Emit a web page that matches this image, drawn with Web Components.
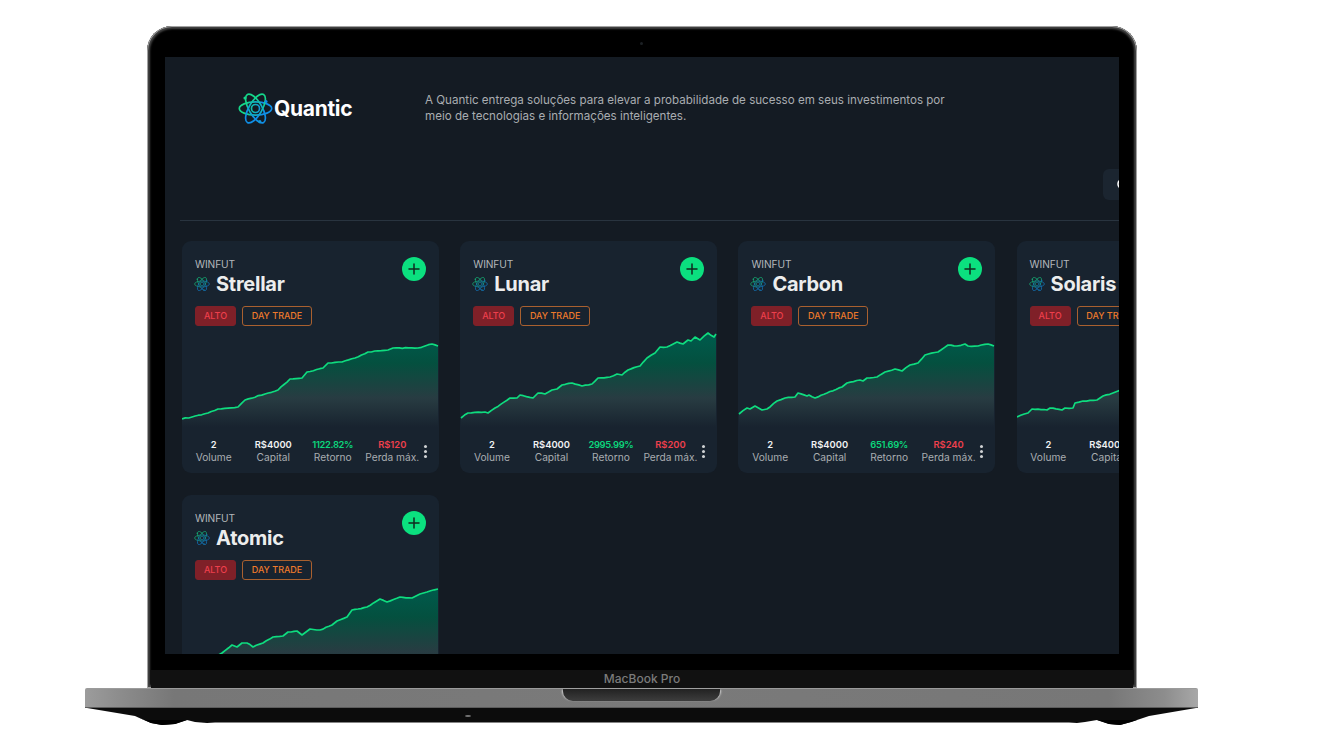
<!DOCTYPE html>
<html lang="pt-BR">
<head>
<meta charset="utf-8">
<title>Quantic</title>
<style>
html, body { margin: 0; background: #fff; }
body { font-family: "Inter", "Liberation Sans", sans-serif; overflow: hidden; }
</style>
</head>
<body>

<laptop-mock>
  <site-header></site-header>
  <search-bar></search-bar>
  <card-grid>
    <strategy-card retorno="1122.82%" perda="R$120" points="0,89 10,87 26,83 36,79 56,77 63,70 83,64 96,60 108,49 120,48 125,42 141,38 146,33 160,32 173,28 186,22 206,20 211,18 236,18 250,14 256,16">Strellar</strategy-card>
    <strategy-card retorno="2995.99%" perda="R$200" points="1,88 8,83 25,82 28,83 35,78 50,68 57,68 60,65 73,68 78,63 85,64 92,60 97,59 102,55 112,53 122,56 132,54 138,48 150,47 157,44 162,45 168,40 180,36 187,28 195,23 200,17 207,17 217,12 223,14 228,10 231,11 235,7 240,10 248,3 254,7 256,4">Lunar</strategy-card>
    <strategy-card retorno="651.69%" perda="R$240" points="1,84 9,78 12,79 17,76 24,80 29,79 39,71 47,68 57,67 60,63 69,66 71,65 77,68 89,63 104,57 109,53 122,50 125,51 129,48 139,47 147,42 157,39 164,41 172,35 180,33 187,25 200,22 210,15 219,16 227,14 230,16 240,16 250,14 256,16">Carbon</strategy-card>
    <strategy-card retorno="980.10%" perda="R$160" points="0,87 11,83 15,79 30,80 33,78 45,80 48,78 56,78 58,73 66,71 80,70 86,66 96,63 101,61 130,55 170,45 200,32 256,20">Solaris</strategy-card>
    <strategy-card retorno="1450.30%" perda="R$180" points="0,92 20,82 40,69 50,61 55,63 60,59 65,59 71,63 81,59 91,53 101,52 106,48 115,47 120,51 128,45 138,46 150,41 155,37 165,33 170,26 185,23 198,15 205,18 218,13 230,14 238,10 245,8 256,5">Atomic</strategy-card>
  </card-grid>
</laptop-mock>

<script>
const atomSvg = (size, id, from, to) => `
<svg width="${size}" height="${size}" viewBox="-20 -20 40 40" fill="none" aria-hidden="true">
  <defs>
    <linearGradient id="${id}" x1="-18" y1="0" x2="18" y2="0" gradientUnits="userSpaceOnUse">
      <stop offset="0.2" stop-color="${from}"/>
      <stop offset="0.7" stop-color="${to}"/>
    </linearGradient>
  </defs>
  <g stroke="url(#${id})" stroke-width="1.9">
    <ellipse cx="0" cy="0" rx="18.5" ry="7.5"/>
    <ellipse cx="0" cy="0" rx="18.5" ry="7.5" transform="rotate(60)"/>
    <ellipse cx="0" cy="0" rx="18.5" ry="7.5" transform="rotate(120)"/>
    <circle cx="0" cy="0" r="4.6"/>
  </g>
  <g fill="url(#${id})">
    <circle cx="-12" cy="-12" r="1.8"/>
    <circle cx="12" cy="-8" r="1.8"/>
    <circle cx="5" cy="15" r="1.8"/>
  </g>
</svg>`;

// laptop frame around the app
const laptopTemplate = document.createElement('template');
laptopTemplate.innerHTML = `
<style>
:host { display: block; width: 1337px; padding-top: 26px; }
.lid {
    box-sizing: border-box;
    width: 990px;
    height: 662px;
    margin-left: 147px;
    padding: 31px 18px 0;
    background: #000;
    border-radius: 25px 25px 0 0;
    box-shadow: inset 0 0 0 1px #a2a2a2, inset 0 0 2px 3px #444;
    position: relative;
    display: flex;
    flex-direction: column;
}
.camera {
    position: absolute;
    top: 16px;
    left: 493px;
    width: 3px;
    height: 3px;
    border-radius: 50%;
    background: #1c2024;
}
.screen {
    width: 954px;
    height: 597px;
    flex: none;
    background: #141b23;
    overflow: hidden;
}
.chin {
    margin: 16px -14px 0;
    flex: 1;
    background: #111;
    color: #7b7b7b;
    font: 500 12px/18px "Inter", "Liberation Sans", sans-serif;
    text-align: center;
}
.base {
    box-sizing: border-box;
    width: 1113px;
    height: 20px;
    margin-left: 85px;
    background: linear-gradient(90deg, #9c9c9c 0, #8d8d8d 3%, #777 8%, #7a7a7a 50%, #777 92%, #8d8d8d 97%, #a8a8a8 100%);
    border-top: 1px solid #9b9b9b;
    border-bottom: 1px solid #5c5c5c;
    border-radius: 2px 2px 0 0;
    display: flex;
    justify-content: center;
}
.notch {
    width: 157px;
    height: 12px;
    background: linear-gradient(#222, #3d3d3d);
    border-radius: 0 0 10px 10px;
    box-shadow: -2px 0 2px -1px #d8d8d8, 2px 0 2px -1px #d8d8d8;
}
.under { display: block; margin-left: 85px; }
</style>
<div class="lid">
  <div class="camera"></div>
  <div class="screen"><slot></slot></div>
  <div class="chin">MacBook Pro</div>
</div>
<div class="base"><div class="notch"></div></div>
<svg class="under" width="1113" height="18" viewBox="0 0 1113 18">
  <path d="M2 0H1111L1064 8 1046 14 1035 17 1024 16 1012 12 1000 14 992 15 984 14.500H130L122 15 110 14 102 12 90 16 77 17 66 15 50 8Z" fill="#0c0c0c"/>
  <path d="M50 8 66 15 77 17 90 16 102 12H60ZM1064 8 1046 14 1035 17 1024 16 1012 12H1052Z" fill="#000"/>
  <ellipse cx="383" cy="8" rx="3" ry="1" fill="#777"/>
</svg>`;

class LaptopMock extends HTMLElement {
  constructor() {
    super();
    this.attachShadow({ mode: 'open' }).appendChild(laptopTemplate.content.cloneNode(true));
  }
}
customElements.define('laptop-mock', LaptopMock);

// logo + description
const headerTemplate = document.createElement('template');
headerTemplate.innerHTML = `
<style>
:host { display: flex; align-items: center; height: 34px; padding: 34px 0 0 73px; }
.logo { width: 187px; flex: none; display: flex; align-items: center; gap: 1px; }
.name { color: #fff; font: 700 21px/34px "Inter", "Liberation Sans", sans-serif; letter-spacing: -0.3px; padding-top: 2px; }
p {
    margin: 0;
    width: 540px;
    color: #a9adb1;
    font: 400 11.6px/16px "Inter", "Liberation Sans", sans-serif;
}
</style>
<div class="logo">${atomSvg(35, 'logoGrad', '#14d88a', '#0f8ee6')}<span class="name">Quantic</span></div>
<p>A Quantic entrega soluções para elevar a probabilidade de sucesso em seus investimentos por<br>meio de tecnologias e informações inteligentes.</p>`;

class SiteHeader extends HTMLElement {
  constructor() {
    super();
    this.attachShadow({ mode: 'open' }).appendChild(headerTemplate.content.cloneNode(true));
  }
}
customElements.define('site-header', SiteHeader);

// search field, mostly cut off by the screen edge
const searchTemplate = document.createElement('template');
searchTemplate.innerHTML = `
<style>
:host { display: block; padding-top: 44px; }
.row { display: flex; padding-left: 938px; height: 31px; }
.field {
    flex: none;
    width: 120px;
    box-sizing: border-box;
    padding-left: 14px;
    background: #1b2530;
    border-radius: 6px;
    display: flex;
    align-items: center;
}
hr { border: 0; height: 1px; margin: 20px 0 0 15px; background: #29343f; }
</style>
<div class="row">
  <div class="field">
    <svg width="14" height="14" viewBox="0 0 14 14" fill="none"><circle cx="6" cy="6" r="5" stroke="#fff" stroke-width="1.6"/><path d="M10 10l3 3" stroke="#fff" stroke-width="1.6"/></svg>
  </div>
</div>
<hr>`;

class SearchBar extends HTMLElement {
  constructor() {
    super();
    this.attachShadow({ mode: 'open' }).appendChild(searchTemplate.content.cloneNode(true));
  }
}
customElements.define('search-bar', SearchBar);

const gridTemplate = document.createElement('template');
gridTemplate.innerHTML = `
<style>
:host {
    display: grid;
    grid-template-columns: repeat(4, 257px);
    gap: 22px 21.2px;
    padding: 20px 0 0 17px;
}
</style>
<slot></slot>`;

class CardGrid extends HTMLElement {
  constructor() {
    super();
    this.attachShadow({ mode: 'open' }).appendChild(gridTemplate.content.cloneNode(true));
  }
}
customElements.define('card-grid', CardGrid);

// area chart; adds a small seeded wobble between the hand-read points
let chartCount = 0;
class SparkChart extends HTMLElement {
  constructor() {
    super();
    this.attachShadow({ mode: 'open' });
  }
  connectedCallback() {
    const pts = this.getAttribute('points').trim().split(/\s+/).map(p => p.split(',').map(Number));
    let seed = 7 + chartCount * 13;
    const rnd = () => { seed = (seed * 16807) % 2147483647; return seed / 2147483647 - 0.5; };
    const line = [];
    pts.forEach((p, i) => {
      line.push(p);
      const next = pts[i + 1];
      if (!next) return;
      const steps = Math.floor((next[0] - p[0]) / 3);
      for (let s = 1; s < steps; s++) {
        const t = s / steps;
        line.push([p[0] + (next[0] - p[0]) * t, p[1] + (next[1] - p[1]) * t + rnd() * 0.8]);
      }
    });
    const d = line.map(p => p[0].toFixed(1) + ' ' + p[1].toFixed(1)).join('L');
    const id = 'area' + chartCount++;
    const lastX = line[line.length - 1][0];
    this.shadowRoot.innerHTML = `
<style>
:host { display: block; height: 100px; }
svg { display: block; }
</style>
<svg width="257" height="100" viewBox="0 0 257 100">
  <defs>
    <linearGradient id="${id}" x1="0" y1="0" x2="0" y2="100" gradientUnits="userSpaceOnUse">
      <stop offset="0.1" stop-color="#00594a"/>
      <stop offset="0.33" stop-color="#04503f"/>
      <stop offset="0.68" stop-color="#283c42"/>
      <stop offset="0.97" stop-color="#18232f"/>
    </linearGradient>
  </defs>
  <path d="M${d}L${lastX} 100L${line[0][0]} 100Z" fill="url(#${id})"/>
  <path d="M${d}" fill="none" stroke="#0fdc7f" stroke-width="1.7" stroke-linejoin="round"/>
</svg>`;
  }
}
customElements.define('spark-chart', SparkChart);

const statTemplate = document.createElement('template');
statTemplate.innerHTML = `
<style>
:host { display: block; text-align: center; white-space: nowrap; justify-self: center; }
.value { font: 600 9.4px/12px "Inter", "Liberation Sans", sans-serif; letter-spacing: var(--stat-spacing, 0); color: var(--stat-colour, #f1f2f3); }
.label { font: 400 10.2px/12px "Inter", "Liberation Sans", sans-serif; color: #a9adb1; }
</style>
<div class="value"><slot></slot></div>
<div class="label"></div>`;

class StatItem extends HTMLElement {
  constructor() {
    super();
    this.attachShadow({ mode: 'open' }).appendChild(statTemplate.content.cloneNode(true));
    this.shadowRoot.querySelector('.label').textContent = this.getAttribute('label');
  }
}
customElements.define('stat-item', StatItem);

let cardCount = 0;
const cardTemplate = document.createElement('template');
cardTemplate.innerHTML = `
<style>
:host {
    display: block;
    height: 232px;
    background: #18232f;
    border-radius: 9px;
    overflow: hidden;
    font-family: "Inter", "Liberation Sans", sans-serif;
}
.head { display: flex; justify-content: space-between; padding: 16px 13px 0; }
.market { color: #b3b7bb; font-size: 10.2px; line-height: 14px; letter-spacing: -0.1px; }
.title { display: flex; align-items: center; gap: 6px; margin-top: 1px; color: #eceded; font-size: 20px; font-weight: 700; line-height: 24px; letter-spacing: -0.25px; white-space: nowrap; }
.icon { display: flex; opacity: 0.72; margin-left: -1px; }
.add {
    width: 24px;
    height: 24px;
    border-radius: 50%;
    background: #0be07f;
    display: flex;
    align-items: center;
    justify-content: center;
    flex: none;
}
.tags { display: flex; gap: 6px; padding: 10px 13px 0; }
.tag {
    box-sizing: border-box;
    height: 20px;
    border-radius: 3px;
    font-size: 9px;
    font-weight: 500;
    line-height: 18px;
    text-align: center;
    white-space: nowrap;
}
.alto { width: 41px; background: #7f2028; border: 1px solid #7f2028; color: #ee3f4c; }
.trade { width: 70px; flex: none; border: 1px solid #a9602f; color: #ee7a2b; }
spark-chart { margin-top: 4px; }
.stats {
    display: grid;
    grid-template-columns: repeat(4, 59.5px) 4px;
    padding: 9px 0 0 2px;
    align-items: center;
}
.kebab { display: flex; flex-direction: column; gap: 2px; margin-left: 1.5px; }
.kebab i { width: 3px; height: 3px; border-radius: 50%; background: #cfd2d4; }
.up { --stat-colour: #0bd67c; --stat-spacing: -0.35px; }
.down { --stat-colour: #ee3f4c; }
</style>
<div class="head">
  <div>
    <div class="market">WINFUT</div>
    <div class="title"><span class="icon"></span><slot></slot></div>
  </div>
  <div class="add">
    <svg width="12" height="12" viewBox="0 0 12 12"><path d="M6 1v10M1 6h10" stroke="#10291f" stroke-width="1.5" stroke-linecap="round"/></svg>
  </div>
</div>
<div class="tags"><div class="tag alto">ALTO</div><div class="tag trade">DAY TRADE</div></div>
<spark-chart></spark-chart>
<div class="stats">
  <stat-item label="Volume">2</stat-item>
  <stat-item label="Capital">R$4000</stat-item>
  <stat-item label="Retorno" class="up"></stat-item>
  <stat-item label="Perda máx." class="down"></stat-item>
  <div class="kebab"><i></i><i></i><i></i></div>
</div>`;

class StrategyCard extends HTMLElement {
  constructor() {
    super();
    const root = this.attachShadow({ mode: 'open' });
    const content = cardTemplate.content.cloneNode(true);
    // set before the clone goes in, the chart reads points when it connects
    content.querySelector('.icon').innerHTML = atomSvg(16, 'cardGrad' + cardCount++, '#14d88a', '#0f8ee6');
    content.querySelector('spark-chart').setAttribute('points', this.getAttribute('points'));
    content.querySelector('.up').textContent = this.getAttribute('retorno');
    content.querySelector('.down').textContent = this.getAttribute('perda');
    root.appendChild(content);
  }
}
customElements.define('strategy-card', StrategyCard);
</script>
</body>
</html>
